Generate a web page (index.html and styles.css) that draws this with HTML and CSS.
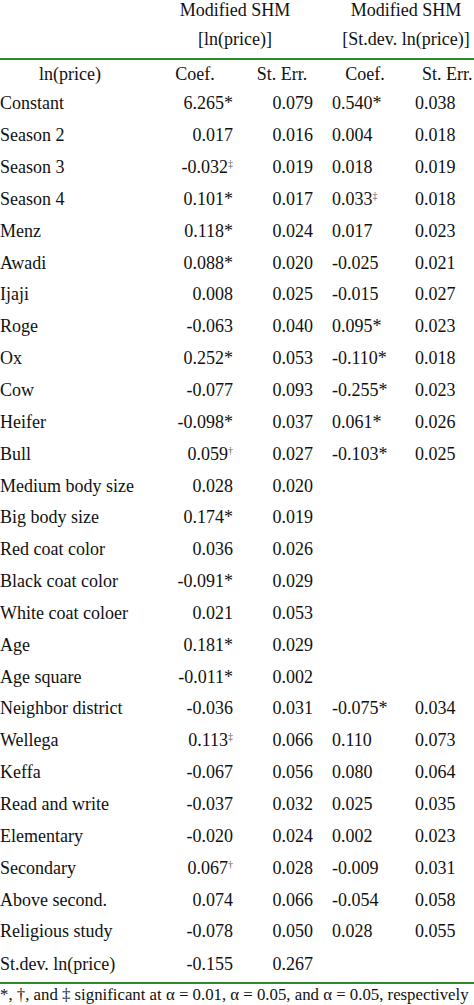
FILE: index.html
```html
<!DOCTYPE html>
<html>
<head>
<meta charset="utf-8">
<link rel="stylesheet" href="styles.css">
</head>
<body>
<div class="table">
  <div class="row head1">
    <div class="c-label"></div>
    <div class="span-a">Modified SHM</div>
    <div class="span-b">Modified SHM</div>
  </div>
  <div class="row head2">
    <div class="c-label"></div>
    <div class="span-a">[ln(price)]</div>
    <div class="span-b">[St.dev. ln(price)]</div>
  </div>
  <div class="rule rule-top"></div>
  <div class="row head3">
    <div class="h-label">ln(price)</div>
    <div class="h-coef1">Coef.</div>
    <div class="h-se1">St. Err.</div>
    <div class="h-coef2">Coef.</div>
    <div class="h-se2">St. Err.</div>
  </div>
  <div class="row"><div class="c-label">Constant</div><div class="c1">6.265*</div><div class="c2">0.079</div><div class="c3">0.540*</div><div class="c4">0.038</div></div>
  <div class="row"><div class="c-label">Season 2</div><div class="c1">0.017</div><div class="c2">0.016</div><div class="c3">0.004</div><div class="c4">0.018</div></div>
  <div class="row"><div class="c-label">Season 3</div><div class="c1">-0.032<sup>‡</sup></div><div class="c2">0.019</div><div class="c3">0.018</div><div class="c4">0.019</div></div>
  <div class="row"><div class="c-label">Season 4</div><div class="c1">0.101*</div><div class="c2">0.017</div><div class="c3">0.033<sup>‡</sup></div><div class="c4">0.018</div></div>
  <div class="row"><div class="c-label">Menz</div><div class="c1">0.118*</div><div class="c2">0.024</div><div class="c3">0.017</div><div class="c4">0.023</div></div>
  <div class="row"><div class="c-label">Awadi</div><div class="c1">0.088*</div><div class="c2">0.020</div><div class="c3">-0.025</div><div class="c4">0.021</div></div>
  <div class="row"><div class="c-label">Ijaji</div><div class="c1">0.008</div><div class="c2">0.025</div><div class="c3">-0.015</div><div class="c4">0.027</div></div>
  <div class="row"><div class="c-label">Roge</div><div class="c1">-0.063</div><div class="c2">0.040</div><div class="c3">0.095*</div><div class="c4">0.023</div></div>
  <div class="row"><div class="c-label">Ox</div><div class="c1">0.252*</div><div class="c2">0.053</div><div class="c3">-0.110*</div><div class="c4">0.018</div></div>
  <div class="row"><div class="c-label">Cow</div><div class="c1">-0.077</div><div class="c2">0.093</div><div class="c3">-0.255*</div><div class="c4">0.023</div></div>
  <div class="row"><div class="c-label">Heifer</div><div class="c1">-0.098*</div><div class="c2">0.037</div><div class="c3">0.061*</div><div class="c4">0.026</div></div>
  <div class="row"><div class="c-label">Bull</div><div class="c1">0.059<sup>†</sup></div><div class="c2">0.027</div><div class="c3">-0.103*</div><div class="c4">0.025</div></div>
  <div class="row"><div class="c-label">Medium body size</div><div class="c1">0.028</div><div class="c2">0.020</div><div class="c3"></div><div class="c4"></div></div>
  <div class="row"><div class="c-label">Big body size</div><div class="c1">0.174*</div><div class="c2">0.019</div><div class="c3"></div><div class="c4"></div></div>
  <div class="row"><div class="c-label">Red coat color</div><div class="c1">0.036</div><div class="c2">0.026</div><div class="c3"></div><div class="c4"></div></div>
  <div class="row"><div class="c-label">Black coat color</div><div class="c1">-0.091*</div><div class="c2">0.029</div><div class="c3"></div><div class="c4"></div></div>
  <div class="row"><div class="c-label">White coat coloer</div><div class="c1">0.021</div><div class="c2">0.053</div><div class="c3"></div><div class="c4"></div></div>
  <div class="row"><div class="c-label">Age</div><div class="c1">0.181*</div><div class="c2">0.029</div><div class="c3"></div><div class="c4"></div></div>
  <div class="row"><div class="c-label">Age square</div><div class="c1">-0.011*</div><div class="c2">0.002</div><div class="c3"></div><div class="c4"></div></div>
  <div class="row"><div class="c-label">Neighbor district</div><div class="c1">-0.036</div><div class="c2">0.031</div><div class="c3">-0.075*</div><div class="c4">0.034</div></div>
  <div class="row"><div class="c-label">Wellega</div><div class="c1">0.113<sup>‡</sup></div><div class="c2">0.066</div><div class="c3">0.110</div><div class="c4">0.073</div></div>
  <div class="row"><div class="c-label">Keffa</div><div class="c1">-0.067</div><div class="c2">0.056</div><div class="c3">0.080</div><div class="c4">0.064</div></div>
  <div class="row"><div class="c-label">Read and write</div><div class="c1">-0.037</div><div class="c2">0.032</div><div class="c3">0.025</div><div class="c4">0.035</div></div>
  <div class="row"><div class="c-label">Elementary</div><div class="c1">-0.020</div><div class="c2">0.024</div><div class="c3">0.002</div><div class="c4">0.023</div></div>
  <div class="row"><div class="c-label">Secondary</div><div class="c1">0.067<sup>†</sup></div><div class="c2">0.028</div><div class="c3">-0.009</div><div class="c4">0.031</div></div>
  <div class="row"><div class="c-label">Above second.</div><div class="c1">0.074</div><div class="c2">0.066</div><div class="c3">-0.054</div><div class="c4">0.058</div></div>
  <div class="row"><div class="c-label">Religious study</div><div class="c1">-0.078</div><div class="c2">0.050</div><div class="c3">0.028</div><div class="c4">0.055</div></div>
  <div class="row last"><div class="c-label">St.dev. ln(price)</div><div class="c1">-0.155</div><div class="c2">0.267</div><div class="c3"></div><div class="c4"></div></div>
  <div class="rule rule-bottom"></div>
  <div class="note">*, †, and ‡ significant at α = 0.01, α = 0.05, and α = 0.05, respectively</div>
</div>
</body>
</html>
```

FILE: styles.css
```css
html, body {
  margin: 0;
  padding: 0;
  background: #ffffff;
}

body {
  font-family: "Liberation Serif", "Times New Roman", serif;
  font-size: 18px;
  color: #111111;
  overflow: hidden;
}

.table {
  width: 474px;
  display: flex;
  flex-direction: column;
}

.row {
  display: grid;
  grid-template-columns: 150px 90px 80px 90px 64px;
  height: 31.85px;
  align-items: center;
  white-space: nowrap;
}

.head1 {
  height: 20px;
}

.head1 .span-a,
.head2 .span-a {
  grid-column: 2 / 4;
  text-align: center;
}

.head1 .span-b,
.head2 .span-b {
  grid-column: 4 / 6;
  text-align: center;
  padding-left: 18px;
}

.head2 {
  height: 38px;
}

.rule {
  height: 2px;
  background: #2b8c2b;
}

.head3 {
  height: 28px;
}

.h-label {
  text-align: center;
  padding-right: 10px;
}

.h-coef1 {
  text-align: center;
}

.h-se1 {
  text-align: center;
  padding-left: 4px;
}

.h-coef2 {
  text-align: center;
}

.h-se2 {
  padding-left: 12px;
}

.c-label {
  padding-left: 0;
}

.c1 {
  text-align: right;
  padding-right: 7px;
}

.c2 {
  text-align: right;
  padding-right: 7px;
}

.c3 {
  padding-left: 12px;
}

.c4 {
  padding-left: 5px;
}

sup {
  font-size: 10px;
  line-height: 0;
  vertical-align: 6px;
  color: #555555;
}

.last {
  height: 34px;
}

.note {
  font-size: 16.8px;
  line-height: 20px;
  padding-top: 1px;
  white-space: nowrap;
}
```
